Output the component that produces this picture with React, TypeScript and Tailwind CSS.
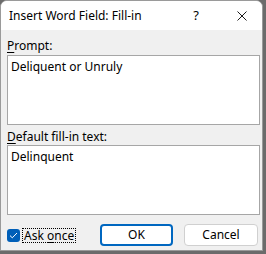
import React, { useState } from 'react';

const font = { fontFamily: '"Noto Sans", "Open Sans", Arial, sans-serif' };

const App: React.FC = () => {
  const [askOnce, setAskOnce] = useState(true);
  const [prompt, setPrompt] = useState('Deliquent or Unruly');
  const [fill, setFill] = useState('Delinquent');

  return (
    <div className="w-[266px] h-[254px] bg-[#6b6b6b] overflow-hidden text-[12px] text-black" style={font}>
      <div className="w-[263px] h-[251px] bg-[#f0f0f0] border border-[#9a9a9a] rounded-t-[7px] flex flex-col overflow-hidden">
        {/* title bar */}
        <div className="h-[29px] bg-white flex items-center shrink-0">
          <span className="pl-[8px] leading-none">Insert Word Field: Fill-in</span>
          <span className="ml-auto mr-[38px] text-[13px] leading-none">?</span>
          <svg width="10" height="10" viewBox="0 0 10 10" className="mr-[15px]">
            <path d="M0.5 0.5 L9.5 9.5 M9.5 0.5 L0.5 9.5" stroke="#1a1a1a" strokeWidth="1" fill="none" />
          </svg>
        </div>

        {/* body */}
        <div className="flex flex-col pl-[6px] pt-[7px]">
          <label className="leading-[17px] h-[18px]">
            <span className="underline underline-offset-2">P</span>rompt:
          </label>
          <textarea
            value={prompt}
            onChange={(e) => setPrompt(e.target.value)}
            className="w-[253px] h-[70px] bg-white border border-[#a6a6a6] resize-none outline-none px-[3px] pt-[3px] leading-[16px]"
          />
          <label className="leading-[17px] h-[20px] pt-[3px]">
            <span className="underline underline-offset-2">D</span>efault fill-in text:
          </label>
          <textarea
            value={fill}
            onChange={(e) => setFill(e.target.value)}
            className="w-[253px] h-[70px] bg-white border border-[#a6a6a6] resize-none outline-none px-[3px] pt-[3px] leading-[16px]"
          />

          {/* footer */}
          <div className="flex items-center mt-[9px] h-[22px]">
            <div className="w-[93px] shrink-0 flex items-center">
              <button
                onClick={() => setAskOnce(!askOnce)}
                className="w-[13px] h-[13px] shrink-0 rounded-[3px] bg-[#005fb8] flex items-center justify-center"
              >
                {askOnce && (
                  <svg width="9" height="7" viewBox="0 0 9 7">
                    <path d="M1 3.6 L3.3 5.8 L8 1" stroke="white" strokeWidth="1" fill="none" />
                  </svg>
                )}
              </button>
              <span className="ml-[2px] whitespace-nowrap border border-dotted border-black px-[1px] h-[15px] leading-[13px]">
                Ask <span className="underline underline-offset-2">o</span>nce
              </span>
            </div>
            <button className="shrink-0 w-[73px] h-[22px] bg-white border-2 border-[#0067c0] rounded-[4px] leading-none">
              OK
            </button>
            <button className="shrink-0 ml-[11px] w-[74px] h-[22px] bg-white border border-[#d0d0d0] rounded-[4px] leading-none">
              Cancel
            </button>
          </div>
        </div>
      </div>
    </div>
  );
};

export default App;
